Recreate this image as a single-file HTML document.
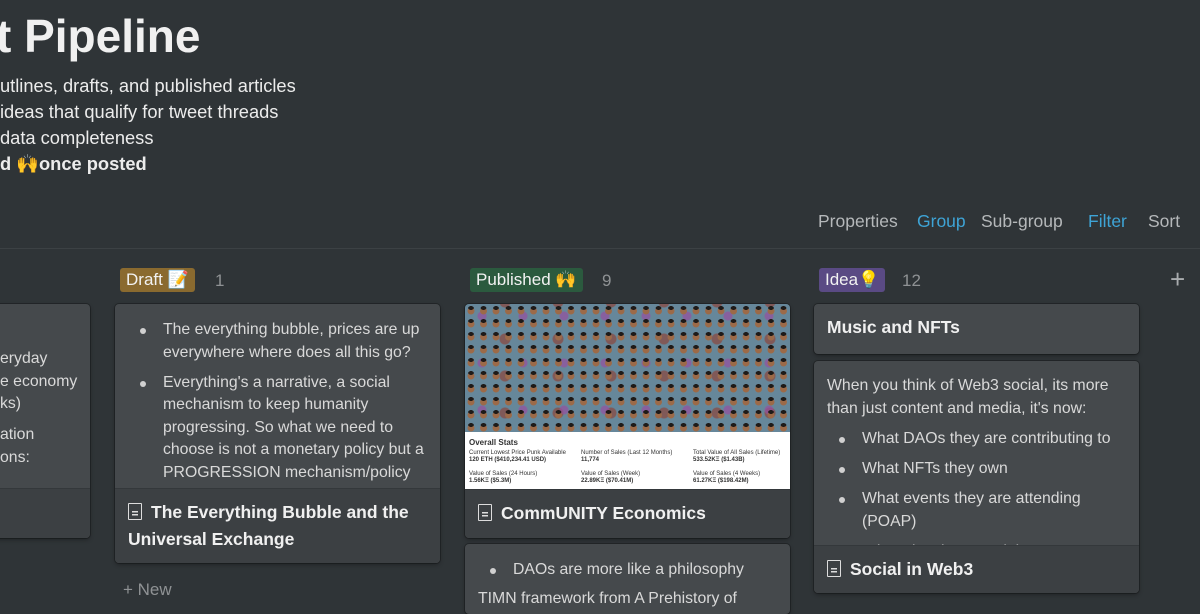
<!DOCTYPE html>
<html><head><meta charset="utf-8"><style>
*{margin:0;padding:0;box-sizing:border-box}
body{width:1200px;height:600px;overflow:hidden;background:#2f3437;font-family:"Liberation Sans",sans-serif;color:#e6e6e6;position:relative}
.a{position:absolute;white-space:nowrap}
.card{position:absolute;background:#45494c;border-radius:4px;box-shadow:0 0 0 1px rgba(0,0,0,.25),0 2px 4px rgba(0,0,0,.3);overflow:hidden}
.foot{position:absolute;left:0;right:0;bottom:0;background:#3c4043;border-top:1px solid #34383b}
.tt{font-size:17.5px;font-weight:bold;color:#f0f0f0;line-height:27px}
.body{font-size:15.8px;line-height:22.5px;color:#d9d9d9}
ul{list-style:none}
li{position:relative;padding-left:48px;margin-bottom:7.5px}
li:before{content:"";position:absolute;left:25px;top:9px;width:6px;height:6px;border-radius:50%;background:#d0d0d0}
.tag{position:absolute;height:24px;border-radius:3px;font-size:17px;line-height:24px;padding:0 6px;color:#f2f2f2}
.cnt{position:absolute;font-size:17px;color:#8f9294}
.doc{display:inline-block;width:14px;height:17px;border:1.5px solid #ddd;border-radius:1px;vertical-align:-2px;margin-right:9px;position:relative;background:linear-gradient(#ddd,#ddd) 3px 7px/6px 1.5px no-repeat,linear-gradient(#ddd,#ddd) 3px 10px/6px 1.5px no-repeat}
.punk{position:absolute;left:0;top:0;width:325px;height:185px;background-color:#66879a;
background-image:radial-gradient(ellipse 3px 2px at 6px 4px,#1e1a18 90%,transparent),radial-gradient(circle at 6px 7px,#9c6a48 3.2px,transparent 3.7px),radial-gradient(circle at 12px 10px,rgba(150,80,160,.7) 4px,transparent 5px),radial-gradient(circle at 20px 25px,rgba(140,70,60,.7) 5px,transparent 6px);
background-size:12.5px 13px,12.5px 13px,41px 47px,53px 37px;background-position:0 0,0 0,5px 2px,20px 10px}
</style></head><body>
<div class="a" style="left:-4px;top:9px;font-size:46px;font-weight:bold;color:#f0f0f0">t Pipeline</div>
<div class="a" style="left:0;top:73px;font-size:18.3px;line-height:26px;color:#ececec">utlines, drafts, and published articles<br>ideas that qualify for tweet threads<br>data completeness<br><b>d 🙌once posted</b></div>
<div class="a" style="left:818px;top:211px;font-size:17.5px;color:#b5b8ba">Properties</div>
<div class="a" style="left:917px;top:211px;font-size:17.5px;color:#3ea4d6">Group</div>
<div class="a" style="left:981px;top:211px;font-size:17.5px;color:#b5b8ba">Sub-group</div>
<div class="a" style="left:1088px;top:211px;font-size:17.5px;color:#3ea4d6">Filter</div>
<div class="a" style="left:1148px;top:211px;font-size:17.5px;color:#b5b8ba">Sort</div>
<div class="a" style="left:0;top:248px;width:1200px;height:1px;background:#3c4144"></div>

<div class="card" style="left:-10px;top:304px;width:100px;height:234px">
<div class="a body" style="left:10px;top:44px">eryday<br>e economy<br>ks)</div>
<div class="a body" style="left:10px;top:120px">ation<br>ons:</div>
<div class="foot" style="height:50px"></div></div>

<div class="tag" style="left:120px;top:268px;background:#8a6a2f">Draft 📝</div>
<div class="cnt" style="left:215px;top:271px">1</div>
<div class="card" style="left:115px;top:304px;width:325px;height:259px">
<ul class="body" style="position:absolute;top:15px;left:0;width:322px;padding-right:10px"><li>The everything bubble, prices are up everywhere where does all this go?</li><li>Everything's a narrative, a social mechanism to keep humanity progressing. So what we need to choose is not a monetary policy but a PROGRESSION mechanism/policy</li></ul>
<div class="foot" style="height:75px;padding:10px 13px"><div class="tt"><span class="doc"></span>The Everything Bubble and the Universal Exchange</div></div></div>
<div class="a" style="left:123px;top:580px;font-size:17px;color:#8f9294">+ New</div>

<div class="tag" style="left:470px;top:268px;background:#2b5a3e">Published 🙌</div>
<div class="cnt" style="left:602px;top:271px">9</div>
<div class="card" style="left:465px;top:304px;width:325px;height:234px">
<div class="punk"></div>
<div style="position:absolute;left:0;top:128px;width:325px;height:57px;background:#fff;color:#333;font-size:6px;padding:6px 4px">
<div style="font-size:8px;font-weight:bold;margin-bottom:3px">Overall Stats</div>
<div style="display:flex;gap:10px;line-height:7px"><div style="width:102px">Current Lowest Price Punk Available<br><b>120 ETH ($410,234.41 USD)</b><br><br>Value of Sales (24 Hours)<br><b>1.56KΞ ($5.3M)</b></div><div style="width:102px">Number of Sales (Last 12 Months)<br><b>11,774</b><br><br>Value of Sales (Week)<br><b>22.89KΞ ($70.41M)</b></div><div>Total Value of All Sales (Lifetime)<br><b>533.52KΞ ($1.43B)</b><br><br>Value of Sales (4 Weeks)<br><b>61.27KΞ ($198.42M)</b></div></div></div>
<div class="foot" style="height:49px;padding:10px 13px;top:185px"><div class="tt"><span class="doc"></span>CommUNITY Economics</div></div></div>
<div class="card" style="left:465px;top:544px;width:325px;height:70px">
<ul class="body" style="position:absolute;top:15px;left:0"><li>DAOs are more like a philosophy</li></ul>
<div class="a body" style="left:13px;top:44px">TIMN framework from A Prehistory of</div></div>

<div class="tag" style="left:819px;top:268px;background:#5a4a84">Idea💡</div>
<div class="cnt" style="left:902px;top:271px">12</div>
<div class="a" style="left:1170px;top:264px;font-size:26px;color:#a9acae;font-weight:300">+</div>
<div class="card" style="left:814px;top:304px;width:325px;height:50px">
<div class="a tt" style="left:13px;top:10px">Music and NFTs</div></div>
<div class="card" style="left:814px;top:361px;width:325px;height:232px">
<div class="a body" style="left:13px;top:14px;white-space:normal;width:305px">When you think of Web3 social, its more than just content and media, it's now:</div>
<ul class="body" style="position:absolute;top:67px;left:0;width:310px"><li>What DAOs they are contributing to</li><li>What NFTs they own</li><li>What events they are attending (POAP)</li><li>What else they are doing</li></ul>
<div class="foot" style="height:48px;padding:10px 13px;background:#3c4043"><div class="tt"><span class="doc"></span>Social in Web3</div></div></div>
</body></html>
